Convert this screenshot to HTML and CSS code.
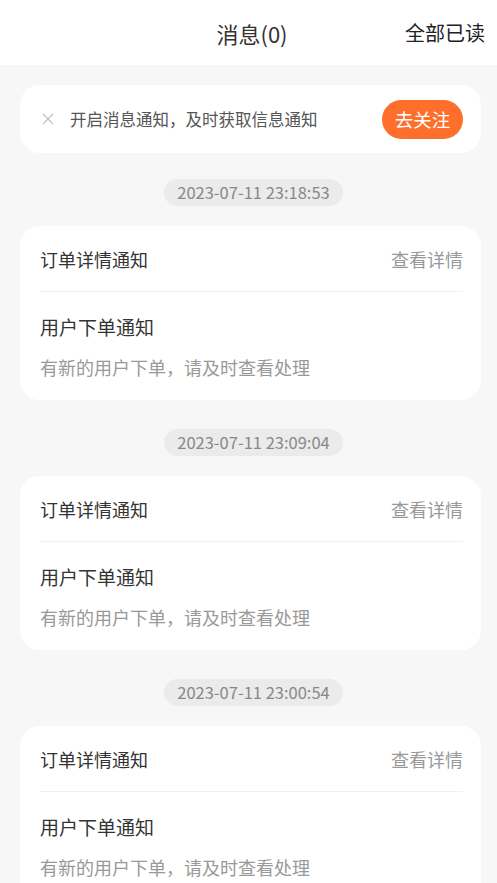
FILE: index.html
```html
<!DOCTYPE html>
<html lang="zh-CN">
<head>
    <meta charset="UTF-8">
    <meta name="viewport" content="width=device-width, initial-scale=1.0">
    <title>消息</title>
    <link rel="stylesheet" href="styles.css">
</head>
<body>
    <div class="page">
        <div class="nav">
            <span class="nav-side"></span>
            <h1 class="nav-title">消息(0)</h1>
            <span class="nav-side nav-action">全部已读</span>
        </div>

        <div class="content">
            <div class="notice">
                <svg class="notice-close" width="12" height="12" viewBox="0 0 12 12">
                    <path d="M1 1L11 11M11 1L1 11" stroke="#c2c2c2" stroke-width="1.3" fill="none"/>
                </svg>
                <span class="notice-text">开启消息通知，及时获取信息通知</span>
                <button class="follow-btn">去关注</button>
            </div>

            <div class="msg-group">
                <div class="msg-time"><span>2023-07-11 23:18:53</span></div>
                <div class="msg-card">
                    <div class="msg-head">
                        <span class="msg-type">订单详情通知</span>
                        <span class="msg-more">查看详情</span>
                    </div>
                    <div class="msg-body">
                        <div class="msg-title">用户下单通知</div>
                        <div class="msg-desc">有新的用户下单，请及时查看处理</div>
                    </div>
                </div>
            </div>

            <div class="msg-group">
                <div class="msg-time"><span>2023-07-11 23:09:04</span></div>
                <div class="msg-card">
                    <div class="msg-head">
                        <span class="msg-type">订单详情通知</span>
                        <span class="msg-more">查看详情</span>
                    </div>
                    <div class="msg-body">
                        <div class="msg-title">用户下单通知</div>
                        <div class="msg-desc">有新的用户下单，请及时查看处理</div>
                    </div>
                </div>
            </div>

            <div class="msg-group">
                <div class="msg-time"><span>2023-07-11 23:00:54</span></div>
                <div class="msg-card">
                    <div class="msg-head">
                        <span class="msg-type">订单详情通知</span>
                        <span class="msg-more">查看详情</span>
                    </div>
                    <div class="msg-body">
                        <div class="msg-title">用户下单通知</div>
                        <div class="msg-desc">有新的用户下单，请及时查看处理</div>
                    </div>
                </div>
            </div>
        </div>
    </div>
</body>
</html>
```

FILE: styles.css
```css
* {
    margin: 0;
    padding: 0;
    box-sizing: border-box;
    font-family: "Noto Sans CJK SC", "Noto Sans", sans-serif;
}

body {
    background-color: #f7f7f7;
    min-height: 100vh;
    color: #333;
    overflow: hidden;
}

.nav {
    height: 65px;
    background: #fff;
    display: flex;
    align-items: center;
    justify-content: space-between;
    padding: 0 12px 0 19px;
}

.nav-side {
    width: 84px;
}

.nav-title {
    font-size: 22px;
    font-weight: 400;
    color: #333;
}

.nav-action {
    font-size: 20px;
    color: #222;
    white-space: nowrap;
    text-align: right;
}

.content {
    padding: 20px 16px 0 20px;
}

.notice {
    background: #fff;
    border-radius: 20px;
    height: 68px;
    display: flex;
    align-items: center;
    padding: 0 18px 0 22px;
}

.notice-close {
    flex-shrink: 0;
    margin-right: 16px;
}

.notice-text {
    flex: 1;
    font-size: 16.5px;
    color: #555;
}

.follow-btn {
    width: 81px;
    height: 39px;
    border: none;
    border-radius: 20px;
    background: #fd6f2b;
    color: #fff;
    font-size: 18.5px;
    cursor: pointer;
}

.msg-group {
    padding-top: 26px;
}

.msg-group + .msg-group {
    padding-top: 29px;
}

.msg-time {
    text-align: center;
    margin-bottom: 20px;
}

.msg-time span {
    display: inline-block;
    height: 27px;
    line-height: 27px;
    padding: 0 13px;
    border-radius: 14px;
    background: #ebebeb;
    color: #888;
    font-size: 16.5px;
    margin-left: 6px;
}

.msg-card {
    background: #fff;
    border-radius: 20px;
    padding: 0 18px 0 20px;
}

.msg-head {
    height: 66px;
    display: flex;
    align-items: center;
    justify-content: space-between;
    border-bottom: 1px solid #f1f1f1;
}

.msg-type {
    font-size: 18px;
    color: #333;
}

.msg-more {
    font-size: 18px;
    color: #999;
}

.msg-body {
    padding: 22px 0 21px;
}

.msg-title {
    font-size: 19px;
    line-height: 26px;
    color: #333;
}

.msg-desc {
    font-size: 18px;
    line-height: 24px;
    color: #999;
    margin-top: 15px;
}
```
